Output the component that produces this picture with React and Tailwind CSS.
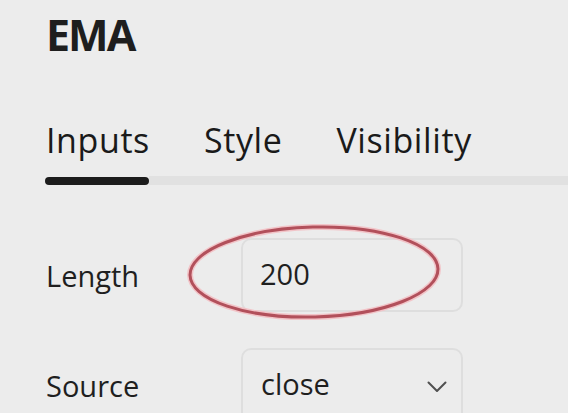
function Tabs() {
  const tabs = ["Inputs", "Style", "Visibility"];
  return (
    <div>
      <div className="flex gap-[54px] pl-[46px] mt-[66px]">
        {tabs.map((tab) => (
          <div key={tab} className="text-[34px] leading-[35px] tracking-[0.6px] text-[#1a1a1a]">
            {tab}
          </div>
        ))}
      </div>
      <div className="flex items-center mt-[18px] pl-[45px]">
        <div className="w-[104px] h-[8px] rounded-full bg-[#1c1c1c]" />
        <div className="flex-1 h-[9px] bg-[#e1e1e1]" />
      </div>
    </div>
  );
}

function FieldRow({ label, children, className }) {
  return (
    <div className={`flex items-center ${className}`}>
      <div className="w-[241px] pl-[46px] text-[29px] leading-[29px] text-[#1f1f1f]">
        {label}
      </div>
      {children}
    </div>
  );
}

export default function App() {
  return (
    <div
      className="relative w-[568px] h-[413px] overflow-hidden bg-[#ececec] text-[#1e1e1e]"
      style={{ fontFamily: '"Open Sans", "Noto Sans", sans-serif' }}
    >
      <div className="pl-[46px] pt-[13px] text-[43px] leading-[44px] font-bold tracking-[-2px]">
        EMA
      </div>

      <Tabs />

      <FieldRow label="Length" className="mt-[53px]">
        <div className="w-[222px] h-[74px] flex items-center pl-[17px] pb-[4px] rounded-[10px] border-2 border-[#dedede] text-[29px] leading-[29px] text-[#1f1f1f]">
          200
        </div>
      </FieldRow>

      <FieldRow label="Source" className="mt-[36px]">
        <div className="w-[222px] h-[74px] flex items-center justify-between pl-[18px] pr-[14px] pb-[4px] rounded-[10px] border-2 border-[#dedede] text-[29px] leading-[29px] text-[#1f1f1f]">
          <span>close</span>
          <svg width="20" height="12" viewBox="0 0 20 12" className="mt-[8px]">
            <polyline
              points="1.5,1.5 10,10 18.5,1.5"
              fill="none"
              stroke="#505050"
              strokeWidth="2"
              strokeLinecap="round"
              strokeLinejoin="round"
            />
          </svg>
        </div>
      </FieldRow>

      <svg
        className="absolute left-0 top-0 pointer-events-none"
        width="568"
        height="413"
        viewBox="0 0 568 413"
      >
        <ellipse
          cx="314"
          cy="272"
          rx="124"
          ry="45"
          transform="rotate(-1.5 314 272)"
          fill="none"
          stroke="#f2c4c8"
          strokeWidth="6"
        />
        <ellipse
          cx="314"
          cy="272"
          rx="124"
          ry="45"
          transform="rotate(-1.5 314 272)"
          fill="none"
          stroke="#b2505b"
          strokeWidth="3"
        />
      </svg>
    </div>
  );
}
